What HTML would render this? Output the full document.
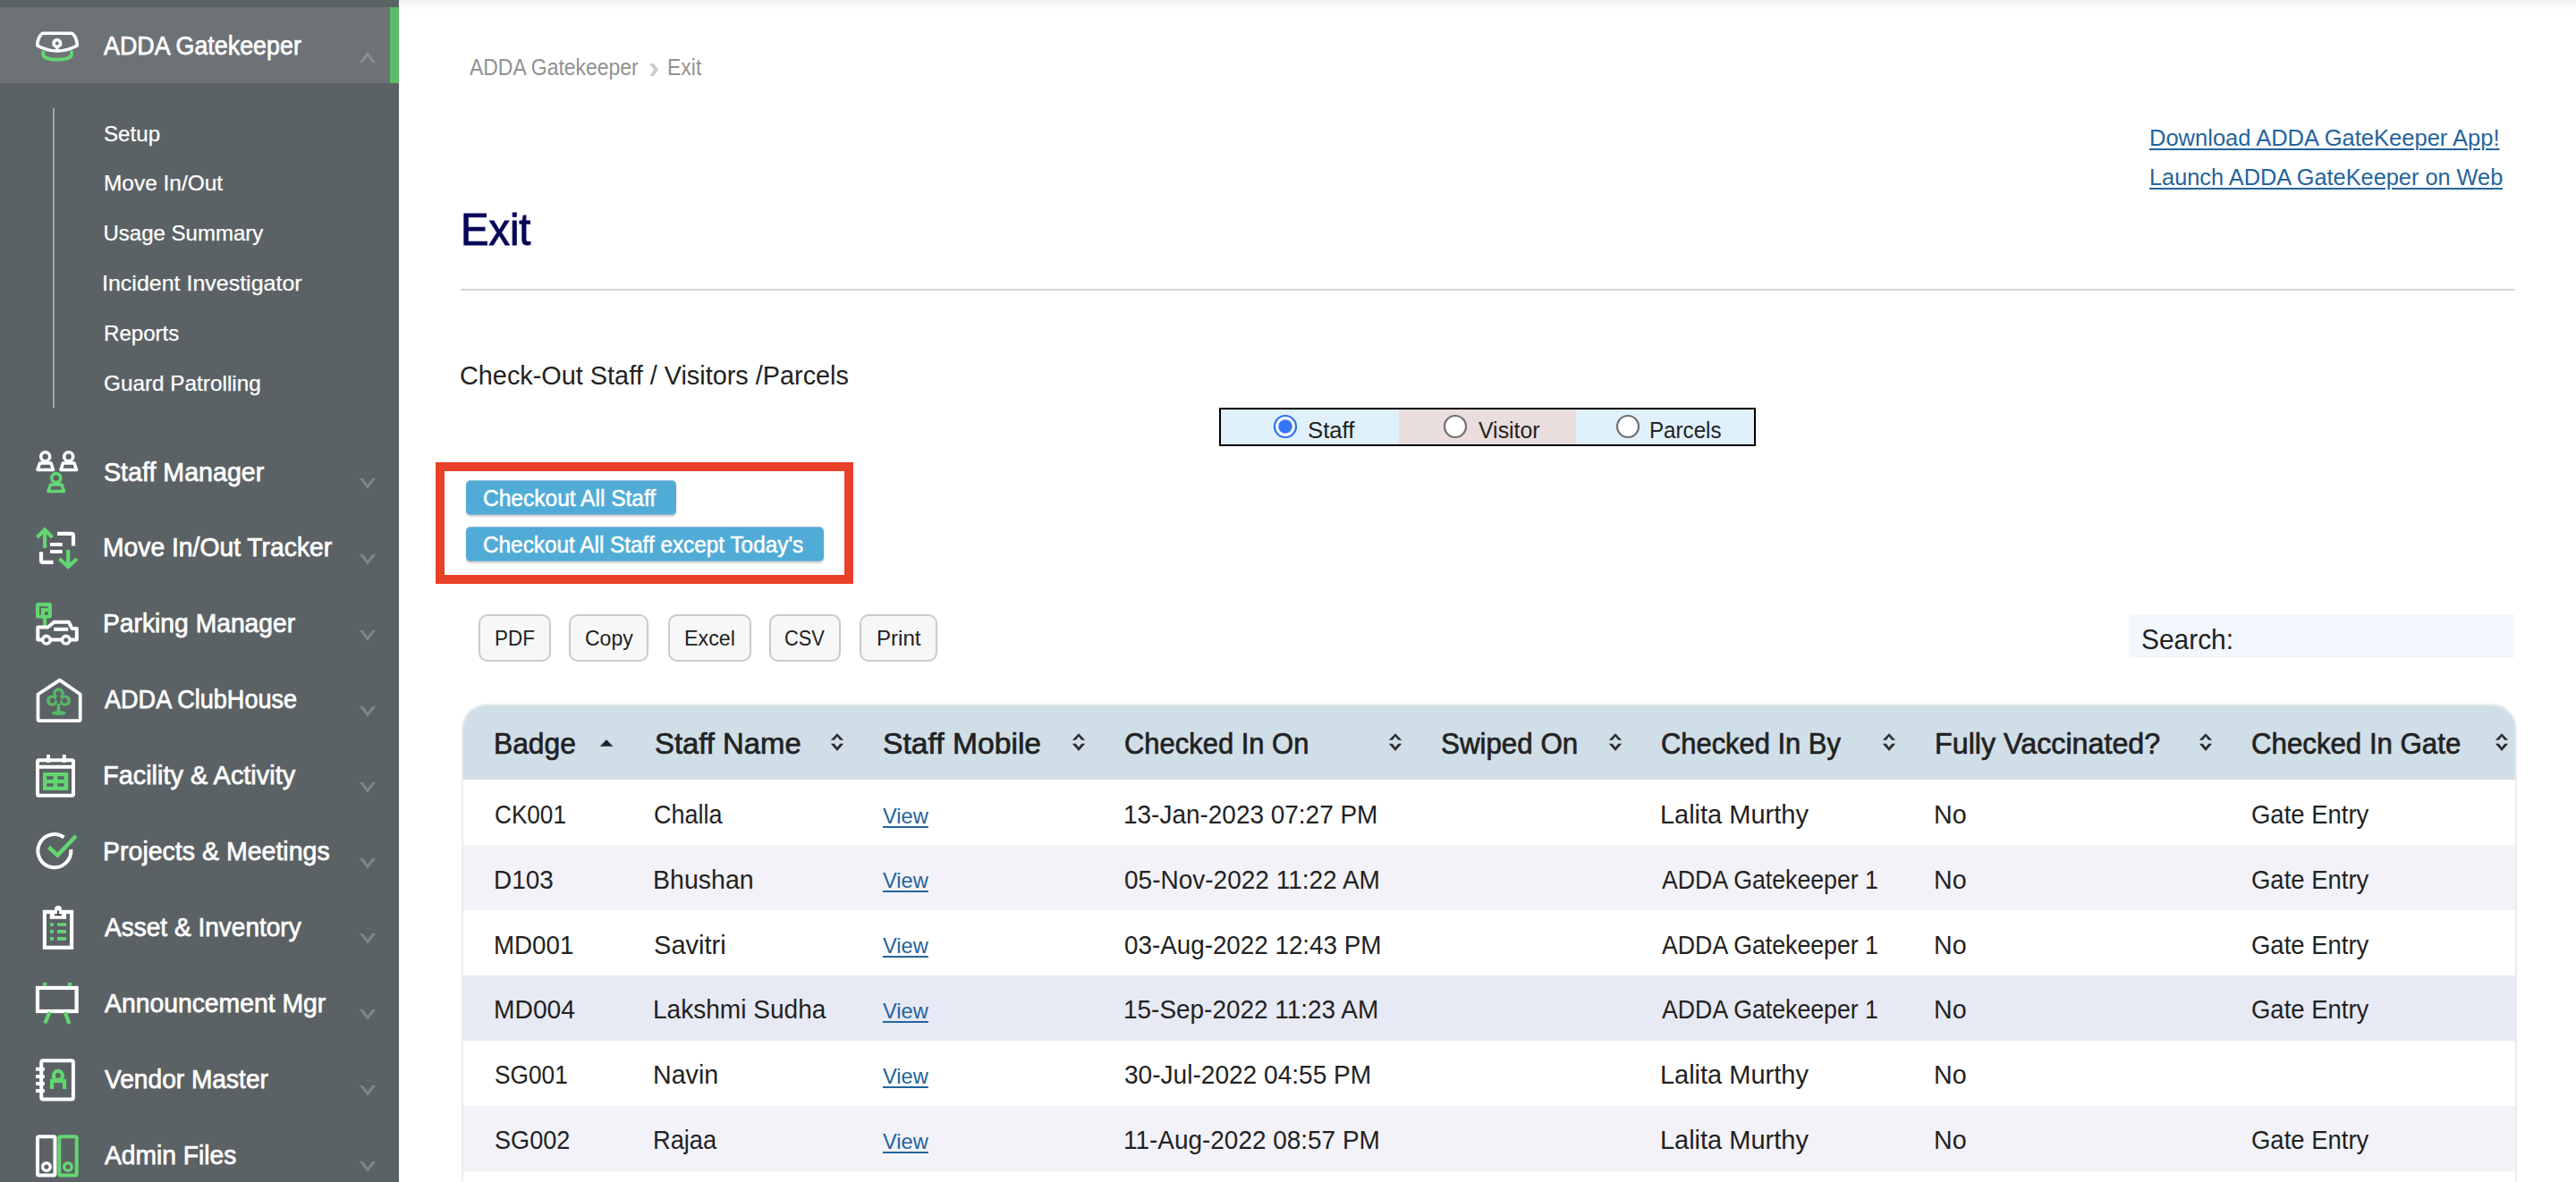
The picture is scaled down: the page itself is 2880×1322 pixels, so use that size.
<!DOCTYPE html>
<html><head><meta charset="utf-8">
<style>
html,body{margin:0;padding:0;}
body{width:2880px;height:1322px;overflow:hidden;position:relative;background:#fff;font-family:"Liberation Sans",sans-serif;}
.a{position:absolute;}
.t{position:absolute;white-space:nowrap;line-height:1;transform-origin:0 0;font-family:"Liberation Sans",sans-serif;}
#side{position:absolute;left:0;top:0;width:446px;height:1322px;background:#5b6265;}
.chev{position:absolute;left:400px;width:22px;height:14px;}
.ebtn{position:absolute;top:687px;height:53px;box-sizing:border-box;border:2px solid #cacaca;border-radius:10px;background:#f7f7f7;}
.cbtn{position:absolute;left:521px;height:39px;box-sizing:border-box;border-top:1.5px solid #8dbbd9;border-bottom:1.5px solid #86b3d3;background:#50acd6;border-radius:5px;box-shadow:0 2px 2px rgba(0,0,0,0.18);}
.sort{position:absolute;top:818px;width:18px;height:24px;}
.row{position:absolute;left:517px;width:2296px;height:72.9px;}
</style></head><body>
<div id="side">
  <div class="a" style="left:0;top:8px;width:436px;height:85px;background:#6d7276"></div>
  <div class="a" style="left:436px;top:8px;width:10px;height:85px;background:#5cbd6b"></div>
  <div class="a" style="left:59px;top:121px;width:2px;height:335px;background:#a4a8aa"></div>
  <!-- chevron up -->
  <svg class="a" style="left:400px;top:55px" width="22" height="18" viewBox="0 0 22 18"><path d="M2,15 L11,3 L20,15 H16.4 L11,7.8 L5.6,15 Z" fill="#898f92"/></svg>
  <svg class="a" style="left:400px;top:533.0px" width="22" height="16" viewBox="0 0 22 16"><path d="M2,2 H5.6 L11,9.1 L16.4,2 H20 L11,13.7 Z" fill="#80868a"/></svg>
  <svg class="a" style="left:400px;top:617.9px" width="22" height="16" viewBox="0 0 22 16"><path d="M2,2 H5.6 L11,9.1 L16.4,2 H20 L11,13.7 Z" fill="#80868a"/></svg>
  <svg class="a" style="left:400px;top:702.8px" width="22" height="16" viewBox="0 0 22 16"><path d="M2,2 H5.6 L11,9.1 L16.4,2 H20 L11,13.7 Z" fill="#80868a"/></svg>
  <svg class="a" style="left:400px;top:787.7px" width="22" height="16" viewBox="0 0 22 16"><path d="M2,2 H5.6 L11,9.1 L16.4,2 H20 L11,13.7 Z" fill="#80868a"/></svg>
  <svg class="a" style="left:400px;top:872.6px" width="22" height="16" viewBox="0 0 22 16"><path d="M2,2 H5.6 L11,9.1 L16.4,2 H20 L11,13.7 Z" fill="#80868a"/></svg>
  <svg class="a" style="left:400px;top:957.5px" width="22" height="16" viewBox="0 0 22 16"><path d="M2,2 H5.6 L11,9.1 L16.4,2 H20 L11,13.7 Z" fill="#80868a"/></svg>
  <svg class="a" style="left:400px;top:1042.4px" width="22" height="16" viewBox="0 0 22 16"><path d="M2,2 H5.6 L11,9.1 L16.4,2 H20 L11,13.7 Z" fill="#80868a"/></svg>
  <svg class="a" style="left:400px;top:1127.3px" width="22" height="16" viewBox="0 0 22 16"><path d="M2,2 H5.6 L11,9.1 L16.4,2 H20 L11,13.7 Z" fill="#80868a"/></svg>
  <svg class="a" style="left:400px;top:1212.2px" width="22" height="16" viewBox="0 0 22 16"><path d="M2,2 H5.6 L11,9.1 L16.4,2 H20 L11,13.7 Z" fill="#80868a"/></svg>
  <svg class="a" style="left:400px;top:1297.1px" width="22" height="16" viewBox="0 0 22 16"><path d="M2,2 H5.6 L11,9.1 L16.4,2 H20 L11,13.7 Z" fill="#80868a"/></svg>
  <!-- icons -->
  <svg class="a" style="left:30px;top:20px" width="70" height="70" viewBox="0 0 70 70">
    <path d="M18.5,17.2 H49.5 C53,17.2 56.3,25 56.3,31 Q34,43 11.7,31 C11.7,25 15,17.2 18.5,17.2 Z" fill="none" stroke="#fff" stroke-width="3.6" stroke-linejoin="round"/>
    <circle cx="33.8" cy="28.4" r="3.8" fill="none" stroke="#fff" stroke-width="3.6"/>
    <path d="M33.8,32 V37" stroke="#fff" stroke-width="3.2"/>
    <path d="M18.3,36.8 V41 C18.3,45 26,46.6 34,46.6 C42,46.6 49.9,45 49.9,41 V36.8" fill="none" stroke="#63d672" stroke-width="3.8"/>
  </svg>
  <svg class="a" style="left:30px;top:490px" width="70" height="70" viewBox="0 0 70 70">
    <g fill="none" stroke="#fff" stroke-width="3.6" stroke-linejoin="round">
      <circle cx="20.7" cy="20.7" r="5"/><path d="M14.5,28 H27 L29.5,35.5 H12 Z"/>
      <circle cx="46.7" cy="20.7" r="5"/><path d="M40.5,28 H53 L55.5,35.5 H38 Z"/>
    </g>
    <g fill="none" stroke="#63d672" stroke-width="3.6" stroke-linejoin="round">
      <circle cx="32.8" cy="44.6" r="5"/><path d="M26.6,52 H39 L41.5,59.5 H24 Z"/>
    </g>
  </svg>
  <svg class="a" style="left:30px;top:575px" width="70" height="70" viewBox="0 0 70 70">
    <g fill="none" stroke="#63d672" stroke-width="4.2">
      <path d="M20.1,17.5 V38"/><path d="M11.5,26 L20.1,17.5 L28.5,26"/>
      <path d="M46.2,40 V58.5"/><path d="M36.5,50 L46.2,59 L56,50"/>
    </g>
    <g fill="none" stroke="#fff" stroke-width="4.2">
      <path d="M34,21.9 H50 Q52,21.9 52,24 V35.5"/>
      <path d="M26,34 H39.7 M26,42 H39.7"/>
      <path d="M16,42.3 V52 Q16,53.9 18,53.9 H29.6"/>
    </g>
  </svg>
  <svg class="a" style="left:30px;top:660px" width="70" height="70" viewBox="0 0 70 70">
    <g fill="none" stroke="#63d672" stroke-width="4">
      <path d="M20.1,31 V41.5"/>
    </g>
    <rect x="10" y="13.9" width="17.9" height="17.6" rx="2.5" fill="#63d672"/>
    <g fill="#5b6265"><rect x="14.1" y="18.3" width="1.8" height="9.5"/><rect x="14.1" y="18.3" width="9.5" height="1.8"/><rect x="20" y="24.2" width="3.8" height="3.8"/></g>
    <g fill="none" stroke="#fff" stroke-width="4" stroke-linejoin="round">
      <path d="M12.3,41.5 H23.5 L30.5,35.8 H47 L50.5,43 H55.8 V55.5 H12.3 Z"/>
      <path d="M30.2,43.8 H46.2"/>
    </g>
    <g fill="#5b6265" stroke="#fff" stroke-width="3.6">
      <circle cx="21.9" cy="55.7" r="4.3"/><circle cx="43.8" cy="55.7" r="4.3"/>
    </g>
  </svg>
  <svg class="a" style="left:30px;top:745px" width="70" height="70" viewBox="0 0 70 70">
    <path d="M12.5,31.5 L36.8,15.6 L59.7,31.5 V59.5 Q59.7,61.2 58,61.2 H14.2 Q12.5,61.2 12.5,59.5 Z" fill="none" stroke="#fff" stroke-width="3.8" stroke-linejoin="round"/>
    <g fill="#56b866"><circle cx="35.5" cy="30.5" r="6.2"/><circle cx="28.2" cy="38.6" r="6.2"/><circle cx="42.8" cy="38.6" r="6.2"/>
      <rect x="33.7" y="42" width="3.6" height="10"/><ellipse cx="35.8" cy="52.5" rx="8" ry="2.4"/></g>
    <g fill="#5b6265"><circle cx="35.5" cy="30.8" r="3"/><circle cx="28.6" cy="38.6" r="3"/><circle cx="42.4" cy="38.6" r="3"/><circle cx="35.5" cy="36.5" r="3"/></g>
  </svg>
  <svg class="a" style="left:30px;top:830px" width="70" height="70" viewBox="0 0 70 70">
    <g fill="none" stroke="#fff" stroke-width="4">
      <rect x="12" y="20.2" width="40" height="39.6" rx="1.5"/>
      <path d="M12,27.8 H52"/>
      <path d="M24,14 V23 M41.8,14 V23"/>
    </g>
    <rect x="18" y="34" width="28.2" height="19.9" fill="#63d672"/>
    <g fill="#5b6265">
      <rect x="22.2" y="38.2" width="7.4" height="3.5"/><rect x="34.3" y="38.2" width="7.4" height="3.5"/>
      <rect x="22.2" y="46.2" width="7.4" height="3.5"/><rect x="34.3" y="46.2" width="7.4" height="3.5"/>
    </g>
  </svg>
  <svg class="a" style="left:30px;top:915px" width="70" height="70" viewBox="0 0 70 70">
    <path d="M41.5,21.5 A18.5,18.5 0 1 0 49.3,35" fill="none" stroke="#fff" stroke-width="4"/>
    <path d="M24.5,32.5 L34.3,41.5 L55,20" fill="none" stroke="#63d672" stroke-width="4.5"/>
  </svg>
  <svg class="a" style="left:30px;top:1000px" width="70" height="70" viewBox="0 0 70 70">
    <rect x="19.9" y="19.9" width="30.2" height="39.9" fill="none" stroke="#fff" stroke-width="4.2"/>
    <path d="M25.8,20 H44.1 V27.8 H25.8 Z" fill="#fff"/>
    <circle cx="35" cy="17" r="4" fill="#fff"/>
    <path d="M35,18.5 V23 M31,23.3 H39" stroke="#222" stroke-width="1.6"/>
    <g fill="#63d672">
      <rect x="26" y="32.3" width="3.9" height="3.5"/><rect x="34" y="32.3" width="10.1" height="3.5"/>
      <rect x="26" y="40" width="3.9" height="3.8"/><rect x="34" y="40" width="10.1" height="3.8"/>
      <rect x="26" y="48" width="3.9" height="3.8"/><rect x="34" y="48" width="10.1" height="3.8"/>
    </g>
  </svg>
  <svg class="a" style="left:30px;top:1085px" width="70" height="70" viewBox="0 0 70 70">
    <rect x="12" y="19.9" width="43.6" height="26.1" fill="none" stroke="#fff" stroke-width="4.2"/>
    <g stroke="#63d672" stroke-width="4.2" fill="none">
      <path d="M20.1,14 V18 M48,14 V18"/>
      <path d="M25.5,47 L20.3,59.5 M42.6,47 L47.5,60"/>
    </g>
  </svg>
  <svg class="a" style="left:30px;top:1170px" width="70" height="70" viewBox="0 0 70 70">
    <rect x="16.2" y="16.2" width="35.7" height="43.4" rx="2" fill="none" stroke="#fff" stroke-width="4"/>
    <path d="M10,25.8 H19.8 M10,34 H19.8 M10,42 H19.8 M10,50 H19.8" stroke="#fff" stroke-width="4"/>
    <circle cx="34.9" cy="32.9" r="5" fill="none" stroke="#63d672" stroke-width="4.2"/>
    <path d="M28.1,48 V38.8 H42 V48" fill="none" stroke="#63d672" stroke-width="4.2"/>
  </svg>
  <svg class="a" style="left:30px;top:1252px" width="70" height="70" viewBox="0 0 70 70">
    <rect x="12" y="19.2" width="19.5" height="43.3" rx="1.5" fill="none" stroke="#fff" stroke-width="4"/>
    <circle cx="21.9" cy="53" r="4.3" fill="none" stroke="#fff" stroke-width="3.4"/>
    <rect x="36.3" y="19.2" width="19.4" height="43.3" rx="1.5" fill="none" stroke="#63d672" stroke-width="4"/>
    <circle cx="45.9" cy="53" r="4.3" fill="none" stroke="#63d672" stroke-width="3.4"/>
  </svg>
</div>

<!-- top shadow -->
<div class="a" style="left:446px;top:0;width:2434px;height:11px;background:linear-gradient(#f1f1f1,rgba(255,255,255,0))"></div>

<!-- breadcrumb chevron -->
<svg class="a" style="left:724px;top:70px" width="14" height="16" viewBox="0 0 14 16"><path d="M2,1 H7 L12.2,8 L7,15 H2 L7,8 Z" fill="#cdcdcd"/></svg>

<!-- hr -->
<div class="a" style="left:515px;top:323px;width:2296px;height:2px;background:#d3d3d3"></div>

<!-- radio group -->
<div class="a" style="left:1363px;top:456px;width:600px;height:43px;box-sizing:border-box;border:2px solid #000;background:#e0f1fc"></div>
<div class="a" style="left:1564px;top:458px;width:198px;height:39px;background:#e9dddd"></div>
<svg class="a" style="left:1420px;top:460px" width="34" height="34" viewBox="0 0 34 34">
  <circle cx="17" cy="17" r="12" fill="#fff" stroke="#2a72ee" stroke-width="2.2"/>
  <circle cx="17" cy="17" r="7.8" fill="#3378f4"/>
</svg>
<svg class="a" style="left:1610px;top:460px" width="34" height="34" viewBox="0 0 34 34">
  <circle cx="17" cy="17" r="12" fill="#fff" stroke="#6f6f6f" stroke-width="2.2"/>
</svg>
<svg class="a" style="left:1803px;top:460px" width="34" height="34" viewBox="0 0 34 34">
  <circle cx="17" cy="17" r="12" fill="#fff" stroke="#6f6f6f" stroke-width="2.2"/>
</svg>

<!-- red box -->
<div class="a" style="left:487px;top:517px;width:467px;height:136px;box-sizing:border-box;border:10px solid #e8412a"></div>
<div class="cbtn" style="top:537px;width:235px"></div>
<div class="cbtn" style="top:589px;width:400px"></div>

<!-- export buttons -->
<div class="ebtn" style="left:535px;width:81px"></div>
<div class="ebtn" style="left:636px;width:89px"></div>
<div class="ebtn" style="left:746.5px;width:93px"></div>
<div class="ebtn" style="left:860px;width:80px"></div>
<div class="ebtn" style="left:961px;width:87px"></div>

<!-- search -->
<div class="a" style="left:2380px;top:687px;width:431px;height:49px;background:#f1f7fd"></div>

<!-- table -->
<div class="a" style="left:516px;top:787px;width:2298px;height:560px;box-sizing:border-box;border:2px solid #ececec;border-radius:28px 28px 0 0;overflow:hidden;background:#fff">
  <div class="a" style="left:0;top:0;width:2296px;height:82.7px;background:#d0dee7"></div>
  <div class="a" style="left:0;top:155.8px;width:2296px;height:72.9px;background:#f2f2f8"></div>
  <div class="a" style="left:0;top:301.9px;width:2296px;height:72.9px;background:#e7e9f4"></div>
  <div class="a" style="left:0;top:447.7px;width:2296px;height:72.9px;background:#f2f2f8"></div>
</div>
<svg class="a" style="left:668px;top:824px" width="20" height="14" viewBox="0 0 20 14"><path d="M2.8,10.7 L10,3.3 L17.3,10.7 Z" fill="#222"/></svg>
<svg class="a" style="left:926.1px;top:816px" width="20" height="28" viewBox="0 0 20 28"><path d="M2.8,11.8 L10,4.2 L17.2,11.8 H13.2 L10,7.8 L6.8,11.8 Z M2.8,15.8 H6.8 L10,19.8 L13.2,15.8 H17.2 L10,24 Z" fill="#2e2e2e"/></svg>
<svg class="a" style="left:1195.9px;top:816px" width="20" height="28" viewBox="0 0 20 28"><path d="M2.8,11.8 L10,4.2 L17.2,11.8 H13.2 L10,7.8 L6.8,11.8 Z M2.8,15.8 H6.8 L10,19.8 L13.2,15.8 H17.2 L10,24 Z" fill="#2e2e2e"/></svg>
<svg class="a" style="left:1549.9px;top:816px" width="20" height="28" viewBox="0 0 20 28"><path d="M2.8,11.8 L10,4.2 L17.2,11.8 H13.2 L10,7.8 L6.8,11.8 Z M2.8,15.8 H6.8 L10,19.8 L13.2,15.8 H17.2 L10,24 Z" fill="#2e2e2e"/></svg>
<svg class="a" style="left:1795.9px;top:816px" width="20" height="28" viewBox="0 0 20 28"><path d="M2.8,11.8 L10,4.2 L17.2,11.8 H13.2 L10,7.8 L6.8,11.8 Z M2.8,15.8 H6.8 L10,19.8 L13.2,15.8 H17.2 L10,24 Z" fill="#2e2e2e"/></svg>
<svg class="a" style="left:2102.2px;top:816px" width="20" height="28" viewBox="0 0 20 28"><path d="M2.8,11.8 L10,4.2 L17.2,11.8 H13.2 L10,7.8 L6.8,11.8 Z M2.8,15.8 H6.8 L10,19.8 L13.2,15.8 H17.2 L10,24 Z" fill="#2e2e2e"/></svg>
<svg class="a" style="left:2456.0px;top:816px" width="20" height="28" viewBox="0 0 20 28"><path d="M2.8,11.8 L10,4.2 L17.2,11.8 H13.2 L10,7.8 L6.8,11.8 Z M2.8,15.8 H6.8 L10,19.8 L13.2,15.8 H17.2 L10,24 Z" fill="#2e2e2e"/></svg>
<svg class="a" style="left:2787.0px;top:816px" width="20" height="28" viewBox="0 0 20 28"><path d="M2.8,11.8 L10,4.2 L17.2,11.8 H13.2 L10,7.8 L6.8,11.8 Z M2.8,15.8 H6.8 L10,19.8 L13.2,15.8 H17.2 L10,24 Z" fill="#2e2e2e"/></svg>
<div class=t style="left:116.34px;top:36.10px;font-size:30px;color:#fff;transform:scaleX(0.8948);-webkit-text-stroke:0.75px #fff;">ADDA Gatekeeper</div>
<div class=t style="left:115.52px;top:137.50px;font-size:24px;color:#fff;transform:scaleX(1.0061);-webkit-text-stroke:0.25px #fff;">Setup</div>
<div class=t style="left:115.51px;top:193.40px;font-size:24px;color:#fff;transform:scaleX(1.0184);-webkit-text-stroke:0.25px #fff;">Move In/Out</div>
<div class=t style="left:115.53px;top:249.30px;font-size:24px;color:#fff;-webkit-text-stroke:0.25px #fff;">Usage Summary</div>
<div class=t style="left:114.45px;top:305.20px;font-size:24px;color:#fff;transform:scaleX(1.0411);-webkit-text-stroke:0.25px #fff;">Incident Investigator</div>
<div class=t style="left:115.52px;top:361.10px;font-size:24px;color:#fff;transform:scaleX(1.0038);-webkit-text-stroke:0.25px #fff;">Reports</div>
<div class=t style="left:115.51px;top:417.00px;font-size:24px;color:#fff;transform:scaleX(1.0133);-webkit-text-stroke:0.25px #fff;">Guard Patrolling</div>
<div class=t style="left:115.80px;top:512.50px;font-size:30px;color:#fff;transform:scaleX(0.9544);-webkit-text-stroke:0.75px #fff;">Staff Manager</div>
<div class=t style="left:114.87px;top:597.40px;font-size:30px;color:#fff;transform:scaleX(0.9426);-webkit-text-stroke:0.75px #fff;">Move In/Out Tracker</div>
<div class=t style="left:114.87px;top:682.30px;font-size:30px;color:#fff;transform:scaleX(0.9418);-webkit-text-stroke:0.75px #fff;">Parking Manager</div>
<div class=t style="left:116.74px;top:767.20px;font-size:30px;color:#fff;transform:scaleX(0.9019);-webkit-text-stroke:0.75px #fff;">ADDA ClubHouse</div>
<div class=t style="left:114.84px;top:852.10px;font-size:30px;color:#fff;transform:scaleX(0.9630);-webkit-text-stroke:0.75px #fff;">Facility &amp; Activity</div>
<div class=t style="left:114.86px;top:937.00px;font-size:30px;color:#fff;transform:scaleX(0.9508);-webkit-text-stroke:0.75px #fff;">Projects &amp; Meetings</div>
<div class=t style="left:116.75px;top:1021.90px;font-size:30px;color:#fff;transform:scaleX(0.9345);-webkit-text-stroke:0.75px #fff;">Asset &amp; Inventory</div>
<div class=t style="left:116.75px;top:1106.80px;font-size:30px;color:#fff;transform:scaleX(0.9441);-webkit-text-stroke:0.75px #fff;">Announcement Mgr</div>
<div class=t style="left:116.75px;top:1191.70px;font-size:30px;color:#fff;transform:scaleX(0.9374);-webkit-text-stroke:0.75px #fff;">Vendor Master</div>
<div class=t style="left:116.75px;top:1276.60px;font-size:30px;color:#fff;transform:scaleX(0.9408);-webkit-text-stroke:0.75px #fff;">Admin Files</div>
<div class=t style="left:524.80px;top:61.90px;font-size:26px;color:#919191;transform:scaleX(0.8824);">ADDA Gatekeeper</div>
<div class=t style="left:745.73px;top:61.90px;font-size:26px;color:#919191;transform:scaleX(0.8856);">Exit</div>
<div class=t style="left:515.01px;top:231.80px;font-size:50px;color:#07075a;transform:scaleX(0.9409);-webkit-text-stroke:1.0px #07075a;">Exit</div>
<div class=t style="left:2403.04px;top:140.60px;font-size:26px;color:#24649b;transform:scaleX(0.9814);text-decoration:underline;text-decoration-thickness:2px;text-underline-offset:3px;">Download ADDA GateKeeper App!</div>
<div class=t style="left:2403.05px;top:185.30px;font-size:26px;color:#24649b;transform:scaleX(0.9742);text-decoration:underline;text-decoration-thickness:2px;text-underline-offset:3px;">Launch ADDA GateKeeper on Web</div>
<div class=t style="left:514.04px;top:404.50px;font-size:30px;color:#222;transform:scaleX(0.9614);">Check-Out Staff / Visitors /Parcels</div>
<div class=t style="left:1461.51px;top:468.10px;font-size:26px;color:#222;transform:scaleX(0.9890);">Staff</div>
<div class=t style="left:1652.50px;top:468.10px;font-size:26px;color:#222;transform:scaleX(0.9555);">Visitor</div>
<div class=t style="left:1844.44px;top:468.10px;font-size:26px;color:#222;transform:scaleX(0.9292);">Parcels</div>
<div class=t style="left:540.46px;top:545.25px;font-size:25px;color:#fff;transform:scaleX(0.9812);-webkit-text-stroke:0.5px #fff;">Checkout All Staff</div>
<div class=t style="left:540.47px;top:596.75px;font-size:25px;color:#fff;transform:scaleX(0.9735);-webkit-text-stroke:0.5px #fff;">Checkout All Staff except Today's</div>
<div class=t style="left:553.07px;top:701.80px;font-size:24px;color:#222;transform:scaleX(0.9344);">PDF</div>
<div class=t style="left:653.94px;top:701.80px;font-size:24px;color:#222;transform:scaleX(0.9577);">Copy</div>
<div class=t style="left:764.73px;top:701.80px;font-size:24px;color:#222;transform:scaleX(0.9706);">Excel</div>
<div class=t style="left:877.39px;top:701.80px;font-size:24px;color:#222;transform:scaleX(0.9082);">CSV</div>
<div class=t style="left:979.70px;top:701.80px;font-size:24px;color:#222;transform:scaleX(1.0045);">Print</div>
<div class=t style="left:2394.35px;top:700.23px;font-size:31.5px;color:#222;transform:scaleX(0.9494);">Search:</div>
<div class=t style="left:552.11px;top:814.95px;font-size:33px;color:#222;transform:scaleX(0.9626);-webkit-text-stroke:0.7px #222;">Badge</div>
<div class=t style="left:731.55px;top:814.95px;font-size:33px;color:#222;transform:scaleX(0.9950);-webkit-text-stroke:0.7px #222;">Staff Name</div>
<div class=t style="left:986.74px;top:814.95px;font-size:33px;color:#222;transform:scaleX(1.0198);-webkit-text-stroke:0.7px #222;">Staff Mobile</div>
<div class=t style="left:1257.29px;top:814.95px;font-size:33px;color:#222;transform:scaleX(0.9374);-webkit-text-stroke:0.7px #222;">Checked In On</div>
<div class=t style="left:1611.08px;top:814.95px;font-size:33px;color:#222;transform:scaleX(0.9489);-webkit-text-stroke:0.7px #222;">Swiped On</div>
<div class=t style="left:1857.29px;top:814.95px;font-size:33px;color:#222;transform:scaleX(0.9362);-webkit-text-stroke:0.7px #222;">Checked In By</div>
<div class=t style="left:2162.79px;top:814.95px;font-size:33px;color:#222;transform:scaleX(0.9775);-webkit-text-stroke:0.7px #222;">Fully Vaccinated?</div>
<div class=t style="left:2516.89px;top:814.95px;font-size:33px;color:#222;transform:scaleX(0.9460);-webkit-text-stroke:0.7px #222;">Checked In Gate</div>
<div class=t style="left:552.80px;top:896.75px;font-size:29px;color:#222;transform:scaleX(0.9013);">CK001</div>
<div class=t style="left:731.27px;top:896.75px;font-size:29px;color:#222;transform:scaleX(0.9295);">Challa</div>
<div class=t style="left:987.40px;top:900.50px;font-size:24px;color:#24649b;transform:scaleX(0.9856);text-decoration:underline;text-decoration-thickness:2px;text-underline-offset:3px;">View</div>
<div class=t style="left:1255.97px;top:896.75px;font-size:29px;color:#222;transform:scaleX(0.9640);">13-Jan-2023 07:27 PM</div>
<div class=t style="left:1855.90px;top:896.75px;font-size:29px;color:#222;">Lalita Murthy</div>
<div class=t style="left:2162.43px;top:896.75px;font-size:29px;color:#222;transform:scaleX(0.9870);">No</div>
<div class=t style="left:2516.55px;top:896.75px;font-size:29px;color:#222;transform:scaleX(0.9470);">Gate Entry</div>
<div class=t style="left:551.78px;top:969.65px;font-size:29px;color:#222;transform:scaleX(0.9622);">D103</div>
<div class=t style="left:730.23px;top:969.65px;font-size:29px;color:#222;transform:scaleX(0.9842);">Bhushan</div>
<div class=t style="left:987.40px;top:973.40px;font-size:24px;color:#24649b;transform:scaleX(0.9856);text-decoration:underline;text-decoration-thickness:2px;text-underline-offset:3px;">View</div>
<div class=t style="left:1256.93px;top:969.65px;font-size:29px;color:#222;transform:scaleX(0.9656);">05-Nov-2022 11:22 AM</div>
<div class=t style="left:1857.90px;top:969.65px;font-size:29px;color:#222;transform:scaleX(0.9209);">ADDA Gatekeeper 1</div>
<div class=t style="left:2162.43px;top:969.65px;font-size:29px;color:#222;transform:scaleX(0.9870);">No</div>
<div class=t style="left:2516.55px;top:969.65px;font-size:29px;color:#222;transform:scaleX(0.9470);">Gate Entry</div>
<div class=t style="left:551.79px;top:1042.55px;font-size:29px;color:#222;transform:scaleX(0.9551);">MD001</div>
<div class=t style="left:731.20px;top:1042.55px;font-size:29px;color:#222;transform:scaleX(1.0022);">Savitri</div>
<div class=t style="left:987.40px;top:1046.30px;font-size:24px;color:#24649b;transform:scaleX(0.9856);text-decoration:underline;text-decoration-thickness:2px;text-underline-offset:3px;">View</div>
<div class=t style="left:1256.94px;top:1042.55px;font-size:29px;color:#222;transform:scaleX(0.9585);">03-Aug-2022 12:43 PM</div>
<div class=t style="left:1857.90px;top:1042.55px;font-size:29px;color:#222;transform:scaleX(0.9209);">ADDA Gatekeeper 1</div>
<div class=t style="left:2162.43px;top:1042.55px;font-size:29px;color:#222;transform:scaleX(0.9870);">No</div>
<div class=t style="left:2516.55px;top:1042.55px;font-size:29px;color:#222;transform:scaleX(0.9470);">Gate Entry</div>
<div class=t style="left:551.75px;top:1115.45px;font-size:29px;color:#222;transform:scaleX(0.9731);">MD004</div>
<div class=t style="left:730.27px;top:1115.45px;font-size:29px;color:#222;transform:scaleX(0.9674);">Lakshmi Sudha</div>
<div class=t style="left:987.40px;top:1119.20px;font-size:24px;color:#24649b;transform:scaleX(0.9856);text-decoration:underline;text-decoration-thickness:2px;text-underline-offset:3px;">View</div>
<div class=t style="left:1255.97px;top:1115.45px;font-size:29px;color:#222;transform:scaleX(0.9633);">15-Sep-2022 11:23 AM</div>
<div class=t style="left:1857.90px;top:1115.45px;font-size:29px;color:#222;transform:scaleX(0.9209);">ADDA Gatekeeper 1</div>
<div class=t style="left:2162.43px;top:1115.45px;font-size:29px;color:#222;transform:scaleX(0.9870);">No</div>
<div class=t style="left:2516.55px;top:1115.45px;font-size:29px;color:#222;transform:scaleX(0.9470);">Gate Entry</div>
<div class=t style="left:552.79px;top:1188.35px;font-size:29px;color:#222;transform:scaleX(0.9052);">SG001</div>
<div class=t style="left:730.23px;top:1188.35px;font-size:29px;color:#222;transform:scaleX(0.9871);">Navin</div>
<div class=t style="left:987.40px;top:1192.10px;font-size:24px;color:#24649b;transform:scaleX(0.9856);text-decoration:underline;text-decoration-thickness:2px;text-underline-offset:3px;">View</div>
<div class=t style="left:1256.93px;top:1188.35px;font-size:29px;color:#222;transform:scaleX(0.9678);">30-Jul-2022 04:55 PM</div>
<div class=t style="left:1855.90px;top:1188.35px;font-size:29px;color:#222;">Lalita Murthy</div>
<div class=t style="left:2162.43px;top:1188.35px;font-size:29px;color:#222;transform:scaleX(0.9870);">No</div>
<div class=t style="left:552.77px;top:1261.25px;font-size:29px;color:#222;transform:scaleX(0.9347);">SG002</div>
<div class=t style="left:730.32px;top:1261.25px;font-size:29px;color:#222;transform:scaleX(0.9391);">Rajaa</div>
<div class=t style="left:987.40px;top:1265.00px;font-size:24px;color:#24649b;transform:scaleX(0.9856);text-decoration:underline;text-decoration-thickness:2px;text-underline-offset:3px;">View</div>
<div class=t style="left:1255.97px;top:1261.25px;font-size:29px;color:#222;transform:scaleX(0.9633);">11-Aug-2022 08:57 PM</div>
<div class=t style="left:1855.90px;top:1261.25px;font-size:29px;color:#222;">Lalita Murthy</div>
<div class=t style="left:2162.43px;top:1261.25px;font-size:29px;color:#222;transform:scaleX(0.9870);">No</div>
<div class=t style="left:2516.55px;top:1261.25px;font-size:29px;color:#222;transform:scaleX(0.9470);">Gate Entry</div>
</body></html>
